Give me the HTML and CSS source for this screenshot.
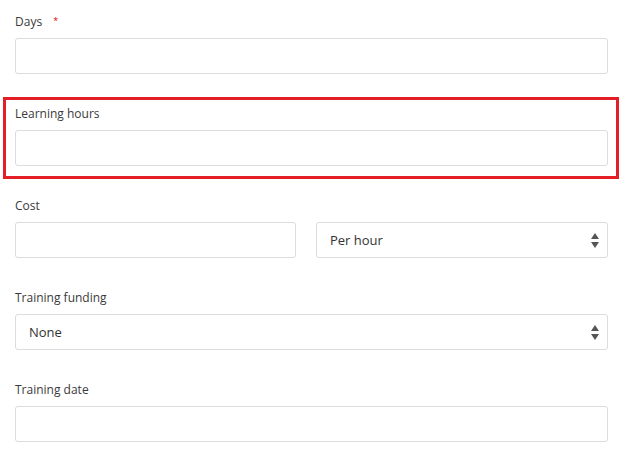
FILE: index.html
```html
<!DOCTYPE html>
<html lang="en">
<head>
    <meta charset="UTF-8">
    <meta name="viewport" content="width=device-width, initial-scale=1.0">
    <title>Training record</title>
    <link rel="stylesheet" href="styles.css">
</head>
<body>
    <form class="training-form">
        <div class="field">
            <label for="days">Days <span class="required">*</span></label>
            <input type="text" id="days" class="control">
        </div>
        <div class="field highlighted">
            <label for="learningHours">Learning hours</label>
            <input type="text" id="learningHours" class="control">
        </div>
        <div class="field">
            <label for="cost">Cost</label>
            <div class="cost-row">
                <input type="text" id="cost" class="control">
                <div class="select-wrap">
                    <select class="control select" id="costUnit">
                        <option>Per hour</option>
                        <option>Per day</option>
                        <option>Total</option>
                    </select>
                    <span class="arrows"></span>
                </div>
            </div>
        </div>
        <div class="field">
            <label for="funding">Training funding</label>
            <div class="select-wrap">
                <select class="control select" id="funding">
                    <option>None</option>
                    <option>Company</option>
                    <option>Government</option>
                </select>
                <span class="arrows"></span>
            </div>
        </div>
        <div class="field">
            <label for="trainingDate">Training date</label>
            <input type="text" id="trainingDate" class="control">
        </div>
    </form>
</body>
</html>
```

FILE: styles.css
```css
body { margin: 0; background: #fff; font-family: "Open Sans", "Liberation Sans", sans-serif; color: #333; }
.training-form { padding-top: 5px; }
.field { width: 616px; margin: 0 0 10px 3px; padding: 6px 8px 10px 9px; border: 3px solid transparent; box-sizing: border-box; }
.field.highlighted { border-color: #e41e26; }
label { display: block; height: 16px; font-size: 12px; line-height: 16px; margin-bottom: 8px; color: #3a3a3a; }
.required { position: relative; top: -2px; margin-left: 8px; color: #e8000b; font-size: 9px; line-height: 0; }
.control { display: block; width: 100%; height: 36px; margin: 0; padding: 0 13px; border: 1px solid #dcdcdc; border-radius: 3px; background: #fff; box-sizing: border-box; font-family: inherit; font-size: 13px; color: #333; outline: none; }
.select { appearance: none; -webkit-appearance: none; }
.cost-row { display: grid; grid-template-columns: 281px 1fr; gap: 20px; }
.select-wrap { position: relative; }
.arrows::before, .arrows::after { content: ""; position: absolute; right: 9px; border-left: 4px solid transparent; border-right: 4px solid transparent; }
.arrows::before { top: 11px; border-bottom: 6px solid #555; }
.arrows::after { top: 20px; border-top: 6px solid #555; }
```
